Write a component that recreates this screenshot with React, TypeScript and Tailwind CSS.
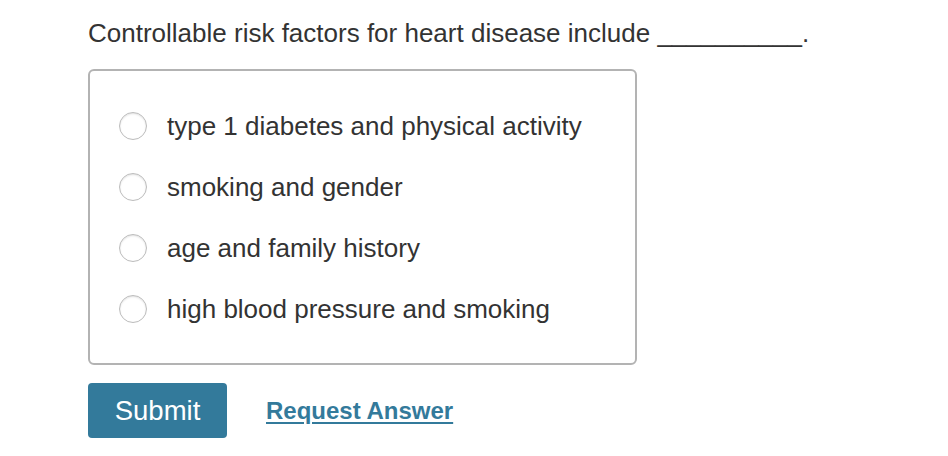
import React, { useState } from 'react';

// Single multiple-choice question card with submit / request answer actions

const choices = [
  'type 1 diabetes and physical activity',
  'smoking and gender',
  'age and family history',
  'high blood pressure and smoking',
];

export default function App() {
  const [selected, setSelected] = useState<number | null>(null);

  return (
    <div className="min-h-screen w-full bg-white pl-[88px] pt-[15px] font-['Liberation_Sans',Arial,sans-serif] text-[#333333]">
      <p className="text-[26px] leading-[36px]">
        Controllable risk factors for heart disease include __________.
      </p>

      <div className="mt-[18px] w-[549px] rounded-[6px] border-2 border-[#b3b3b3] py-[24px] pl-[29px]">
        {choices.map((choice, i) => (
          <label
            key={choice}
            className="flex h-[61px] cursor-pointer items-center gap-[20px]"
            onClick={() => setSelected(i)}
          >
            <span
              className={`h-[28px] w-[28px] shrink-0 rounded-full border border-[#bcbcbc] bg-white shadow-[inset_0_1px_2px_rgba(0,0,0,0.12)] ${
                selected === i ? 'ring-[7px] ring-inset ring-[#337a9b]' : ''
              }`}
            />
            <span className="text-[26px] leading-[30px]">{choice}</span>
          </label>
        ))}
      </div>

      <div className="mt-[18px] flex items-center gap-[39px]">
        <button className="h-[55px] w-[139px] rounded-[4px] bg-[#337a9b] text-[27.5px] text-white">
          Submit
        </button>
        <a
          href="#"
          className="text-[24px] font-bold text-[#337a9b] underline decoration-[2px] underline-offset-[3px]"
        >
          Request Answer
        </a>
      </div>
    </div>
  );
}
